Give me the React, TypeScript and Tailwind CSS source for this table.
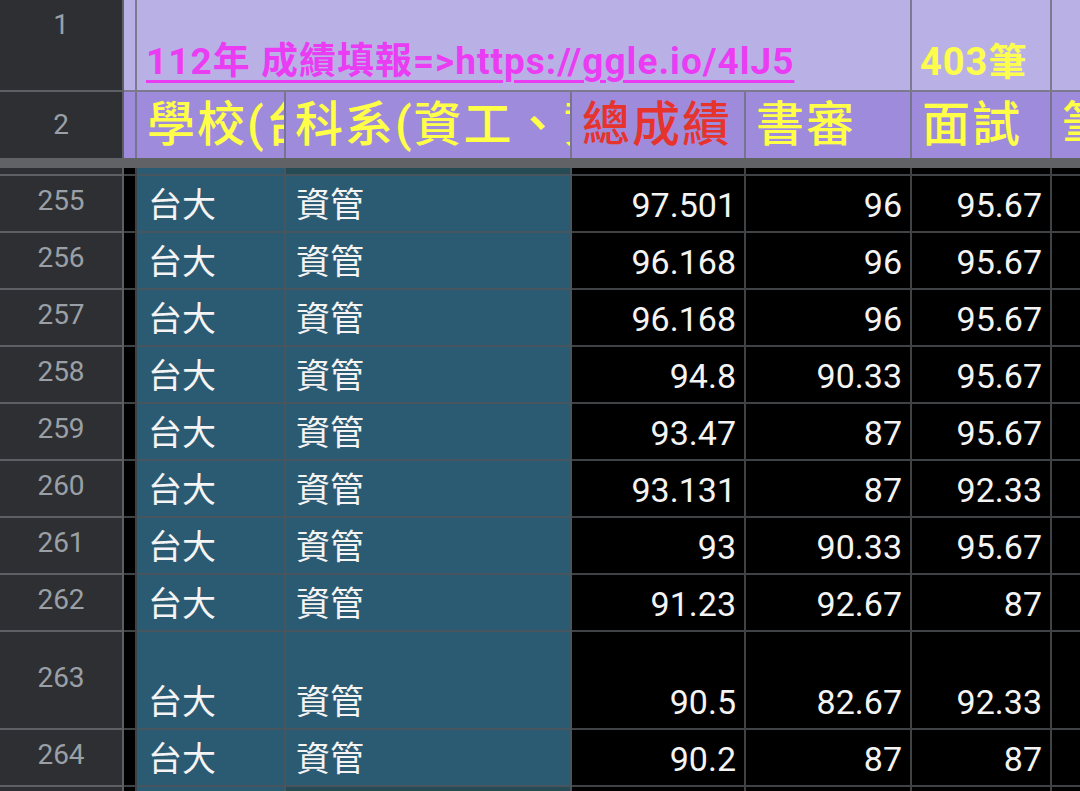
const rows = [
  { n: 255, d: '97.501', e: '96', f: '95.67' },
  { n: 256, d: '96.168', e: '96', f: '95.67' },
  { n: 257, d: '96.168', e: '96', f: '95.67' },
  { n: 258, d: '94.8', e: '90.33', f: '95.67' },
  { n: 259, d: '93.47', e: '87', f: '95.67' },
  { n: 260, d: '93.131', e: '87', f: '92.33' },
  { n: 261, d: '93', e: '90.33', f: '95.67' },
  { n: 262, d: '91.23', e: '92.67', f: '87' },
  { n: 263, d: '90.5', e: '82.67', f: '92.33', tall: true },
  { n: 264, d: '90.2', e: '87', f: '87' },
]

type Row = { n: number; d: string; e: string; f: string; tall?: boolean }

function DataRow({ r }: { r: Row }) {
  return (
    <div className={r.tall ? 'flex h-[98px]' : 'flex h-[57px]'}>
      <div className="w-[124px] shrink-0 flex items-center justify-center pb-[5px] bg-[#2e2f33] border-r-2 border-b-2 border-[#5c5f63] text-[28px] text-[#9aa0a6]">
        {r.n}
      </div>
      <div className="w-[13px] shrink-0 bg-black border-r-2 border-b-2 border-[#404346]" />
      <div className="w-[149px] shrink-0 flex items-end pl-[11px] pb-[6px] bg-[#2b5a73] border-r-2 border-b-2 border-[#46555e] text-[34px] leading-[40px] text-[#f4f4f4]">
        台大
      </div>
      <div className="w-[286px] shrink-0 flex items-end pl-[10px] pb-[6px] bg-[#2b5a73] border-r-2 border-b-2 border-[#46555e] text-[34px] leading-[40px] text-[#f4f4f4]">
        資管
      </div>
      <div className="w-[174px] shrink-0 flex items-end justify-end pr-[8px] pb-[6px] bg-black border-r-2 border-b-2 border-[#404346] text-[34px] leading-[40px] text-[#f4f4f4]">
        {r.d}
      </div>
      <div className="w-[166px] shrink-0 flex items-end justify-end pr-[8px] pb-[6px] bg-black border-r-2 border-b-2 border-[#404346] text-[34px] leading-[40px] text-[#f4f4f4]">
        {r.e}
      </div>
      <div className="w-[140px] shrink-0 flex items-end justify-end pr-[8px] pb-[6px] bg-black border-r-2 border-b-2 border-[#404346] text-[34px] leading-[40px] text-[#f4f4f4]">
        {r.f}
      </div>
      <div className="flex-1 bg-black border-b-2 border-[#404346]" />
    </div>
  )
}

export default function App() {
  return (
    <div className="w-[1080px] h-[791px] overflow-hidden bg-black font-['Roboto','Noto_Sans_CJK_TC',sans-serif]">
      {/* row 1 — title */}
      <div className="flex h-[92px]">
        <div className="w-[124px] shrink-0 flex justify-center pt-[9px] bg-[#2e2f33] border-r-2 border-b-2 border-[#5c5f63] text-[28px] leading-[32px] text-[#9aa0a6]">
          1
        </div>
        <div className="w-[13px] shrink-0 bg-[#b9b1e6] border-r-2 border-b-2 border-[#7c7a8e]" />
        <div className="w-[775px] shrink-0 flex items-end pl-[9px] pb-[8px] bg-[#b9b1e6] border-r-2 border-b-2 border-[#7c7a8e] whitespace-nowrap">
          <span className="text-[37px] leading-[40px] tracking-[1px] font-bold text-[#ea3cf2] underline decoration-[3px] underline-offset-[6px]">
            112年 成績填報=&gt;https://ggle.io/4lJ5
          </span>
        </div>
        <div className="w-[140px] shrink-0 flex items-end pl-[8px] pb-[8px] bg-[#b9b1e6] border-r-2 border-b-2 border-[#7c7a8e] text-[38px] leading-[40px] tracking-[1px] font-bold text-[#fdfd4f] whitespace-nowrap">
          403筆
        </div>
        <div className="flex-1 bg-[#b9b1e6] border-b-2 border-[#7c7a8e]" />
      </div>

      {/* row 2 — column titles */}
      <div className="flex h-[66px]">
        <div className="w-[124px] shrink-0 flex items-center justify-center bg-[#2e2f33] border-r-2 border-[#5c5f63] text-[28px] text-[#9aa0a6]">
          2
        </div>
        <div className="w-[13px] shrink-0 bg-[#9e8bdb] border-r-2 border-[#77758c]" />
        <div className="w-[149px] shrink-0 flex items-center pl-[10px] overflow-hidden whitespace-nowrap bg-[#9e8bdb] border-r-2 border-[#77758c] text-[48px] leading-[56px] tracking-[2px] font-medium text-[#ffff48]">
          學校(台大、清大)
        </div>
        <div className="w-[286px] shrink-0 flex items-center pl-[9px] overflow-hidden whitespace-nowrap bg-[#9e8bdb] border-r-2 border-[#77758c] text-[48px] leading-[56px] tracking-[2px] font-medium text-[#ffff48]">
          科系(資工、資管)
        </div>
        <div className="w-[174px] shrink-0 flex items-center pl-[10px] overflow-hidden whitespace-nowrap bg-[#9e8bdb] border-r-2 border-[#77758c] text-[48px] leading-[56px] tracking-[2px] font-medium text-[#e6332b]">
          總成績
        </div>
        <div className="w-[166px] shrink-0 flex items-center pl-[10px] overflow-hidden whitespace-nowrap bg-[#9e8bdb] border-r-2 border-[#77758c] text-[48px] leading-[56px] tracking-[2px] font-medium text-[#ffff48]">
          書審
        </div>
        <div className="w-[140px] shrink-0 flex items-center pl-[10px] overflow-hidden whitespace-nowrap bg-[#9e8bdb] border-r-2 border-[#77758c] text-[48px] leading-[56px] tracking-[2px] font-medium text-[#ffff48]">
          面試
        </div>
        <div className="flex-1 flex items-center pl-[10px] overflow-hidden whitespace-nowrap bg-[#9e8bdb] text-[48px] leading-[56px] tracking-[2px] font-medium text-[#ffff48]">
          筆試
        </div>
      </div>

      {/* frozen rows divider */}
      <div className="h-[10px] bg-[#606266]" />

      {/* partly scrolled-off row */}
      <div className="flex h-[8px]">
        <div className="w-[124px] shrink-0 bg-[#2e2f33] border-r-2 border-b-2 border-[#5c5f63]" />
        <div className="w-[13px] shrink-0 bg-black border-r-2 border-b-2 border-[#404346]" />
        <div className="w-[149px] shrink-0 bg-[#2b5a73] border-r-2 border-b-2 border-[#46555e]" />
        <div className="w-[286px] shrink-0 bg-[#274b55] border-r-2 border-b-2 border-[#46555e]" />
        <div className="w-[174px] shrink-0 bg-black border-r-2 border-b-2 border-[#404346]" />
        <div className="w-[166px] shrink-0 bg-black border-r-2 border-b-2 border-[#404346]" />
        <div className="w-[140px] shrink-0 bg-black border-r-2 border-b-2 border-[#404346]" />
        <div className="flex-1 bg-black border-b-2 border-[#404346]" />
      </div>

      {rows.map((r) => (
        <DataRow key={r.n} r={r} />
      ))}

      {/* next row, cut off by the window */}
      <div className="flex h-[20px]">
        <div className="w-[124px] shrink-0 bg-[#2e2f33] border-r-2 border-[#5c5f63]" />
        <div className="w-[13px] shrink-0 bg-black border-r-2 border-[#404346]" />
        <div className="w-[149px] shrink-0 bg-[#2b5a73] border-r-2 border-[#46555e]" />
        <div className="w-[286px] shrink-0 bg-[#274b55] border-r-2 border-[#46555e]" />
        <div className="w-[174px] shrink-0 bg-black border-r-2 border-[#404346]" />
        <div className="w-[166px] shrink-0 bg-black border-r-2 border-[#404346]" />
        <div className="w-[140px] shrink-0 bg-black border-r-2 border-[#404346]" />
        <div className="flex-1 bg-black" />
      </div>
    </div>
  )
}
